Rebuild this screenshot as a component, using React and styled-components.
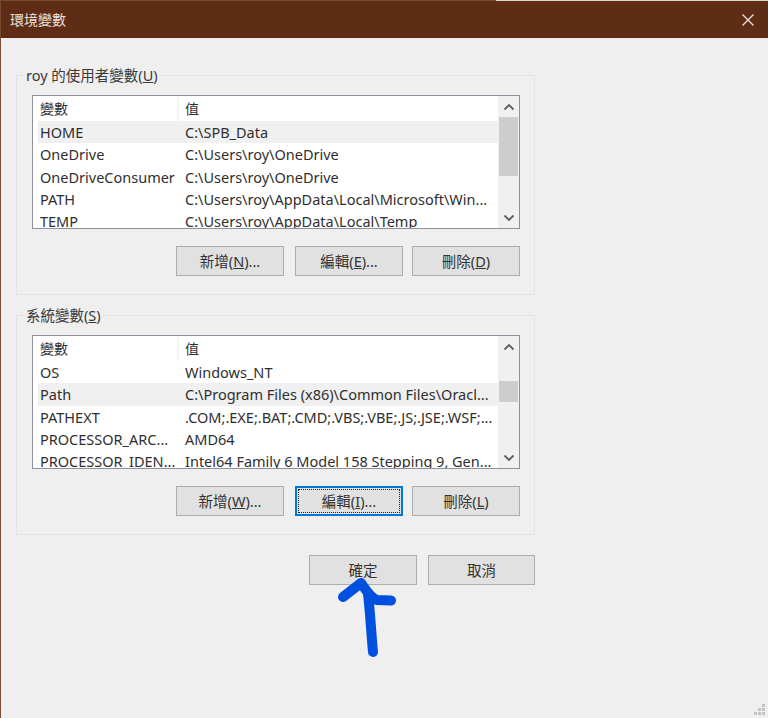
import React from "react";
import styled, { createGlobalStyle } from "styled-components";

const Global = createGlobalStyle`
  html, body { margin: 0; padding: 0; background: #efefef; }
  body { font-family: "Noto Sans", "Noto Sans CJK TC", sans-serif; font-size: 14.5px; color: #2f2f2f; }
  * { box-sizing: border-box; }
`;
const Window = styled.div`
  position: relative;
  width: 768px;
  height: 718px;
  overflow: hidden;
  background: #efefef;
  border-left: 1px solid #7a4a30;
`;
const TopStrip = styled.div`
  height: 1px;
  background: linear-gradient(to right, #7a4a30 0, #7a4a30 495px, #d8d4d0 495px);
`;
const TitleBar = styled.div`
  height: 37px;
  background: #5f2c16;
  color: #e9e2dc;
  display: flex;
  align-items: center;
  justify-content: space-between;
  padding: 0 13px 0 9px;
`;
const TitleText = styled.div`
  font-size: 14px;
  line-height: 36px;
`;
const Body = styled.div`
  padding: 27px 0 0 15px;
  width: 534px;
`;
const Group = styled.fieldset`
  margin: 0 0 10px;
  padding: 10px 14px 18px 15px;
  min-width: 0;
  height: 230px;
  border: 1px solid #e3e3e3;
  border-radius: 0;
`;
const Legend = styled.legend`
  margin-left: -7px;
  padding: 0 1px;
  line-height: 20px;
  height: 20px;
  color: #3a3a3a;
`;
const ListBox = styled.div`
  display: flex;
  width: 488px;
  height: 134px;
  background: #fff;
  border: 1px solid #8f8f9d;
  overflow: hidden;
`;
const ListBody = styled.div`
  flex: 1;
  min-width: 0;
  padding-left: 5px;
  overflow: hidden;
`;
const HeaderRow = styled.div`
  display: flex;
  height: 25px;
  align-items: center;
`;
const HeaderCell = styled.div`
  width: ${(p) => p.$w}px;
  height: 100%;
  flex: none;
  padding-left: ${(p) => p.$pad}px;
  line-height: 26px;
  font-size: 14px;
  border-right: ${(p) => (p.$divider ? "2px solid #f3f3f3" : "none")};
`;
const Row = styled.div`
  display: flex;
  height: 22.25px;
  line-height: 23px;
  white-space: nowrap;
  background: ${(p) => (p.$selected ? "#f0f0f0" : "transparent")};
`;
const NameCell = styled.div`
  width: 145px;
  flex: none;
  padding-left: 2px;
  overflow: hidden;
`;
const ValueCell = styled.div`
  flex: 1;
  min-width: 0;
  padding-left: 2px;
  overflow: hidden;
`;
const ScrollBar = styled.div`
  width: 21px;
  flex: none;
  display: flex;
  flex-direction: column;
  padding-left: 1px;
  background: #f0f0f0;
`;
const ScrollArrow = styled.div`
  height: ${(p) => p.$h}px;
  flex: none;
  display: flex;
  align-items: center;
  justify-content: center;
`;
const Track = styled.div`
  flex: 1;
  min-height: 0;
  padding-top: ${(p) => p.$top}px;
`;
const Thumb = styled.div`
  height: ${(p) => p.$h}px;
  width: 19px;
  background: #cdcdcd;
`;
const ButtonRow = styled.div`
  display: flex;
  justify-content: flex-end;
  margin-top: 17px;
`;
const ActionRow = styled.div`
  display: flex;
  justify-content: flex-end;
  gap: 11px;
  margin-top: 20px;
`;
const Button = styled.div`
  width: ${(p) => p.$w || 108}px;
  height: 30px;
  margin-left: ${(p) => p.$ml || 0}px;
  background: #e1e1e1;
  border: 1px solid #adadad;
  display: flex;
  align-items: center;
  justify-content: center;
  color: #333;
  line-height: 28px;
  white-space: nowrap;
  ${(p) =>
    p.$focused &&
    `
    border: 2px solid #0078d7;
    outline: 1px dotted #222;
    outline-offset: -4px;
  `}
`;
const Annotation = styled.svg`
  position: absolute;
  left: 329px;
  top: 570px;
`;
const Grip = styled.svg`
  position: absolute;
  right: 2px;
  bottom: 2px;
`;

const Chevron = ({ up }) => (
  <svg width="12" height="8" viewBox="0 0 12 8">
    <path d={up ? "M1.5 6.5 L6 2 L10.5 6.5" : "M1.5 1.5 L6 6 L10.5 1.5"} fill="none" stroke="#606060" strokeWidth="1.8" />
  </svg>
);

const VarList = ({ rows, selected, thumbTop, thumbH }) => (
  <ListBox>
    <ListBody>
      <HeaderRow>
        <HeaderCell $w={141} $pad={2} $divider>變數</HeaderCell>
        <HeaderCell $w={300} $pad={6}>值</HeaderCell>
      </HeaderRow>
      {rows.map(([n, v], i) => (
        <Row key={n} $selected={i === selected}>
          <NameCell>{n}</NameCell>
          <ValueCell>{v}</ValueCell>
        </Row>
      ))}
    </ListBody>
    <ScrollBar>
      <ScrollArrow $h={21}><Chevron up /></ScrollArrow>
      <Track $top={thumbTop}><Thumb $h={thumbH} /></Track>
      <ScrollArrow $h={21}><Chevron /></ScrollArrow>
    </ScrollBar>
  </ListBox>
);

const userRows = [
  ["HOME", "C:\\SPB_Data"],
  ["OneDrive", "C:\\Users\\roy\\OneDrive"],
  ["OneDriveConsumer", "C:\\Users\\roy\\OneDrive"],
  ["PATH", "C:\\Users\\roy\\AppData\\Local\\Microsoft\\Win..."],
  ["TEMP", "C:\\Users\\roy\\AppData\\Local\\Temp"],
];
const sysRows = [
  ["OS", "Windows_NT"],
  ["Path", "C:\\Program Files (x86)\\Common Files\\Oracl..."],
  ["PATHEXT", ".COM;.EXE;.BAT;.CMD;.VBS;.VBE;.JS;.JSE;.WSF;..."],
  ["PROCESSOR_ARC...", "AMD64"],
  ["PROCESSOR_IDEN...", "Intel64 Family 6 Model 158 Stepping 9, Gen..."],
];

export default function App() {
  return (
    <>
      <Global />
      <Window>
        <TopStrip />
        <TitleBar>
          <TitleText>環境變數</TitleText>
          <svg width="14" height="14" viewBox="0 0 14 14">
            <path d="M1.5 1.5 L12.5 12.5 M12.5 1.5 L1.5 12.5" stroke="#e8e4e0" strokeWidth="1.3" />
          </svg>
        </TitleBar>
        <Body>
          <Group>
            <Legend>roy 的使用者變數(<u>U</u>)</Legend>
            <VarList rows={userRows} selected={0} thumbTop={0} thumbH={59} />
            <ButtonRow>
              <Button>新增(<u>N</u>)...</Button>
              <Button $ml={11}>編輯(<u>E</u>)...</Button>
              <Button $ml={9}>刪除(<u>D</u>)</Button>
            </ButtonRow>
          </Group>
          <Group>
            <Legend>系統變數(<u>S</u>)</Legend>
            <VarList rows={sysRows} selected={1} thumbTop={24} thumbH={21} />
            <ButtonRow>
              <Button>新增(<u>W</u>)...</Button>
              <Button $focused $ml={11}>編輯(<u>I</u>)...</Button>
              <Button $ml={9}>刪除(<u>L</u>)</Button>
            </ButtonRow>
          </Group>
          <ActionRow>
            <Button>確定</Button>
            <Button $w={107}>取消</Button>
          </ActionRow>
        </Body>
        <Annotation width="72" height="92" viewBox="0 0 72 92">
          <path
            d="M13 27 L31 13 C36 20 41 28 47 30 L61 30.5 M38 24 C40 40 41 60 43 82"
            fill="none"
            stroke="#0050e0"
            strokeWidth="10"
            strokeLinecap="round"
            strokeLinejoin="round"
          />
        </Annotation>
        <Grip width="12" height="12" viewBox="0 0 12 12">
          <path d="M8 0h3v3H8z M4 4h3v3H4z M8 4h3v3H8z M0 8h3v3H0z M4 8h3v3H4z M8 8h3v3H8z" fill="#c4c4c4" />
        </Grip>
      </Window>
    </>
  );
}
